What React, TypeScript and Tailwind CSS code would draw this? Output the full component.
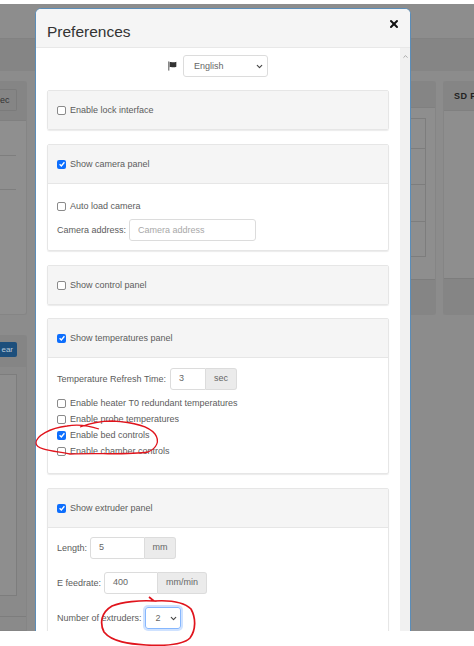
import React from "react";
import { X, ChevronDown, ChevronUp } from "lucide-react";

function Check({ on, label }: { on?: boolean; label: string }) {
  return (
    <label className="flex items-center gap-[4px] h-[16px] text-[9px] text-[#5c5c5c]">
      {on ? (
        <span className="w-[9px] h-[9px] rounded-[2px] bg-[#0d6efd] flex items-center justify-center shrink-0">
          <svg viewBox="0 0 10 10" className="w-[8px] h-[8px]"><path d="M2 5.2 L4.2 7.4 L8 2.8" fill="none" stroke="#fff" strokeWidth="1.7" /></svg>
        </span>
      ) : (
        <span className="w-[9px] h-[9px] rounded-[2px] bg-white border border-[#8a8a8a] shrink-0" />
      )}
      <span className="pt-[1px]">{label}</span>
    </label>
  );
}

function Head({ on, label }: { on?: boolean; label: string }) {
  return (
    <div className="h-[38px] bg-[#f5f5f5] flex items-center px-[9px] shrink-0">
      <Check on={on} label={label} />
    </div>
  );
}

function Panel({ children, className }: { children: React.ReactNode; className?: string }) {
  return <div className={"border border-[#e6e6e6] rounded-[2px] shadow-[0_1px_1px_rgba(0,0,0,0.08)] overflow-hidden " + (className ?? "")}>{children}</div>;
}

function Group({ value, unit, w, uw }: { value: string; unit: string; w: string; uw: string }) {
  return (
    <div className="flex h-[22px] text-[9px] text-[#666]">
      <div className={"border border-[#dcdcdc] rounded-l-[3px] bg-white flex items-center pl-[8px] " + w}>{value}</div>
      <div className={"border border-l-0 border-[#dcdcdc] rounded-r-[3px] bg-[#ebebeb] flex items-center justify-center " + uw}>{unit}</div>
    </div>
  );
}

function Backdrop() {
  return (
    <div className="h-full bg-[#8c8c8c] flex flex-col font-['Liberation_Sans',Arial,sans-serif]">
      <div className="h-[35px] border-b border-[#828282] bg-[#8d8d8d] shrink-0" />
      <div className="h-[32px] border-b border-[#858585] bg-[#858585] shrink-0" />
      <div className="flex-1 flex pt-[10px] justify-between">
        <div className="w-[27px] flex flex-col">
          <div className="h-[234px] bg-[#8f8f8f] border border-l-0 border-[#858585] rounded-r-[3px] flex flex-col">
            <div className="h-[39px] bg-[#858585] border-b border-[#808080] pt-[7px] shrink-0">
              <div className="w-[17px] h-[22px] border border-l-0 border-[#7b7b7b] rounded-r-[2px] bg-[#858585] text-[9px] leading-[20px] text-right pr-[8px] text-[#333]">ec</div>
            </div>
            <div className="h-[35px] border-b border-[#7e7e7e] mr-[10px]" />
            <div className="h-[34px] border-b border-[#7e7e7e] mr-[10px]" />
          </div>
          <div className="mt-[20px] flex-1 bg-[#8a8a8a] border border-l-0 border-[#858585] rounded-tr-[3px] flex flex-col">
            <div className="h-[31px] bg-[#858585] pt-[6px] shrink-0">
              <div className="w-[17px] h-[15px] bg-[#1d4f7c] rounded-r-[2px] text-[8px] leading-[15px] text-right pr-[4px] text-[#b9c9d8]">ear</div>
            </div>
            <div className="mt-[7px] mr-[9px] h-[222px] bg-[#8e8e8e] border border-l-0 border-[#7d7d7d]" />
            <div className="mt-[20px] h-[1px] bg-[#7d7d7d]" />
          </div>
        </div>
        <div className="flex gap-[7px]">
          <div className="w-[26px] h-[234px] bg-[#8e8e8e] border border-l-0 border-[#858585] rounded-r-[3px] flex flex-col">
            <div className="h-[26px] bg-[#858585] border-b border-[#808080] shrink-0" />
            <div className="mt-[10px] mr-[9px] h-[139px] border border-l-0 border-[#7d7d7d] flex flex-col">
              <div className="h-[30px] border-b border-[#7d7d7d]" />
              <div className="h-[36px] border-b border-[#7d7d7d]" />
              <div className="h-[37px] border-b border-[#7d7d7d]" />
            </div>
            <div className="mt-[22px] flex-1 bg-[#858585] border-t border-[#7d7d7d]" />
          </div>
          <div className="w-[31px] h-[234px] bg-[#8e8e8e] border border-r-0 border-[#858585] rounded-l-[3px] flex flex-col">
            <div className="h-[29px] bg-[#858585] border-b border-[#808080] shrink-0 pl-[10px] pt-[8px] text-[9px] font-bold tracking-[0.4px] text-[#222] whitespace-nowrap">SD F</div>
            <div className="h-[168px] border-b border-[#7d7d7d]" />
            <div className="flex-1 bg-[#858585]" />
          </div>
        </div>
      </div>
    </div>
  );
}

function Modal() {
  return (
    <div className="absolute left-[35px] top-[4px] w-[376px] h-[640px] bg-white border-[1.5px] border-[#5b8db8] rounded-t-[6px] overflow-hidden flex flex-col font-['Liberation_Sans',Arial,sans-serif]">
      <div className="h-[39px] bg-[#f5f5f5] border-b border-[#e8e8e8] shrink-0 flex items-center justify-between pl-[11px] pr-[10px]">
        <span className="text-[15.5px] text-[#333] mt-[8px]">Preferences</span>
        <X size={12} strokeWidth={4} color="#111" className="mb-[8px]" />
      </div>
      <div className="flex-1 flex min-h-0">
        <div className="flex-1 px-[11px] pt-[7px] flex flex-col">
          <div className="flex justify-center items-center gap-[5px] h-[22px]">
            <svg viewBox="0 0 12 12" className="w-[10px] h-[10px]">
              <rect x="0.5" y="0.5" width="1" height="11" fill="#333" />
              <path d="M2 1.5 C4 0.5 6 2.5 10 1 L10 7 C6 8.5 4 6.5 2 7.5 Z" fill="#333" />
            </svg>
            <div className="relative w-[85px] h-[22px] border border-[#dcdcdc] rounded-[3px] text-[9px] text-[#666] pl-[10px] leading-[20px]">
              English
              <ChevronDown size={9} strokeWidth={3} color="#444" className="absolute right-[3px] top-[6px]" />
            </div>
          </div>
          <Panel className="mt-[13px] shrink-0"><Head label="Enable lock interface" /></Panel>
          <Panel className="mt-[14px] shrink-0">
            <Head on label="Show camera panel" />
            <div className="h-[67px] border-t border-[#e6e6e6] px-[9px] pt-[14px]">
              <Check label="Auto load camera" />
              <div className="mt-[5px] flex items-center gap-[3px] text-[9px] text-[#5c5c5c]">
                <span className="pt-[1px]">Camera address:</span>
                <div className="w-[127px] h-[22px] border border-[#dcdcdc] rounded-[3px] text-[#a8a8a8] pl-[8px] leading-[20px]">Camera address</div>
              </div>
            </div>
          </Panel>
          <Panel className="mt-[14px] shrink-0"><Head label="Show control panel" /></Panel>
          <Panel className="mt-[13px] shrink-0">
            <Head on label="Show temperatures panel" />
            <div className="h-[116px] border-t border-[#e6e6e6] px-[9px] pt-[10px]">
              <div className="flex items-center gap-[4px] text-[9px] text-[#5c5c5c]">
                <span className="pt-[1px]">Temperature Refresh Time:</span>
                <Group value="3" unit="sec" w="w-[36px]" uw="w-[31px]" />
              </div>
              <div className="mt-[5px] flex flex-col">
                <Check label="Enable heater T0 redundant temperatures" />
                <Check label="Enable probe temperatures" />
                <Check on label="Enable bed controls" />
                <Check label="Enable chamber controls" />
              </div>
            </div>
          </Panel>
          <Panel className="mt-[14px] shrink-0">
            <Head on label="Show extruder panel" />
            <div className="h-[120px] border-t border-[#e6e6e6] px-[9px] pt-[9px] text-[9px] text-[#5c5c5c]">
              <div className="flex items-center gap-[3px]">
                <span className="pt-[1px]">Length:</span>
                <Group value="5" unit="mm" w="w-[55px]" uw="w-[31px]" />
              </div>
              <div className="mt-[13px] flex items-center gap-[3px]">
                <span className="pt-[1px]">E feedrate:</span>
                <Group value="400" unit="mm/min" w="w-[54px]" uw="w-[49px]" />
              </div>
              <div className="mt-[13px] flex items-center gap-[3px]">
                <span className="pt-[1px]">Number of extruders:</span>
                <div className="relative w-[36px] h-[22px] border border-[#86b7fe] rounded-[3px] shadow-[0_0_0_2px_rgba(13,110,253,0.2)] text-[#666] pl-[10px] leading-[20px]">
                  2
                  <ChevronDown size={9} strokeWidth={3} color="#444" className="absolute right-[2px] top-[6px]" />
                </div>
              </div>
            </div>
          </Panel>
        </div>
        <div className="w-[10px] bg-[#f1f1f1] shrink-0 flex justify-center pt-[5px]">
          <ChevronUp size={7} strokeWidth={3} color="#a0a0a0" />
        </div>
      </div>
    </div>
  );
}

export default function App() {
  return (
    <div className="relative w-[474px] h-[646px] bg-white overflow-hidden pt-[4px]">
      <div className="relative h-[627px] overflow-hidden">
        <Backdrop />
        <Modal />
      </div>
      <svg viewBox="0 0 474 646" className="absolute inset-0 w-[474px] h-[646px] pointer-events-none">
        <path d="M99 429 C90 426 78 424 67 426 C50 428 36 436 36 443 C36 450 55 451 70 454 C100 453 130 455 148 452 C157 448 160 441 155 434 C148 425 130 422 112 421 C100 421 88 424 80 427" fill="none" stroke="#e0141c" strokeWidth="1.3" />
        <path d="M149 597 L154 601 C140 600 122 602 112 606 C102 612 99 622 104 632 C112 642 130 644 146 645 C165 646 183 645 190 638 C196 630 196 618 191 609 C184 602 170 600 154 601" fill="none" stroke="#e0141c" strokeWidth="1.7" />
      </svg>
    </div>
  );
}
